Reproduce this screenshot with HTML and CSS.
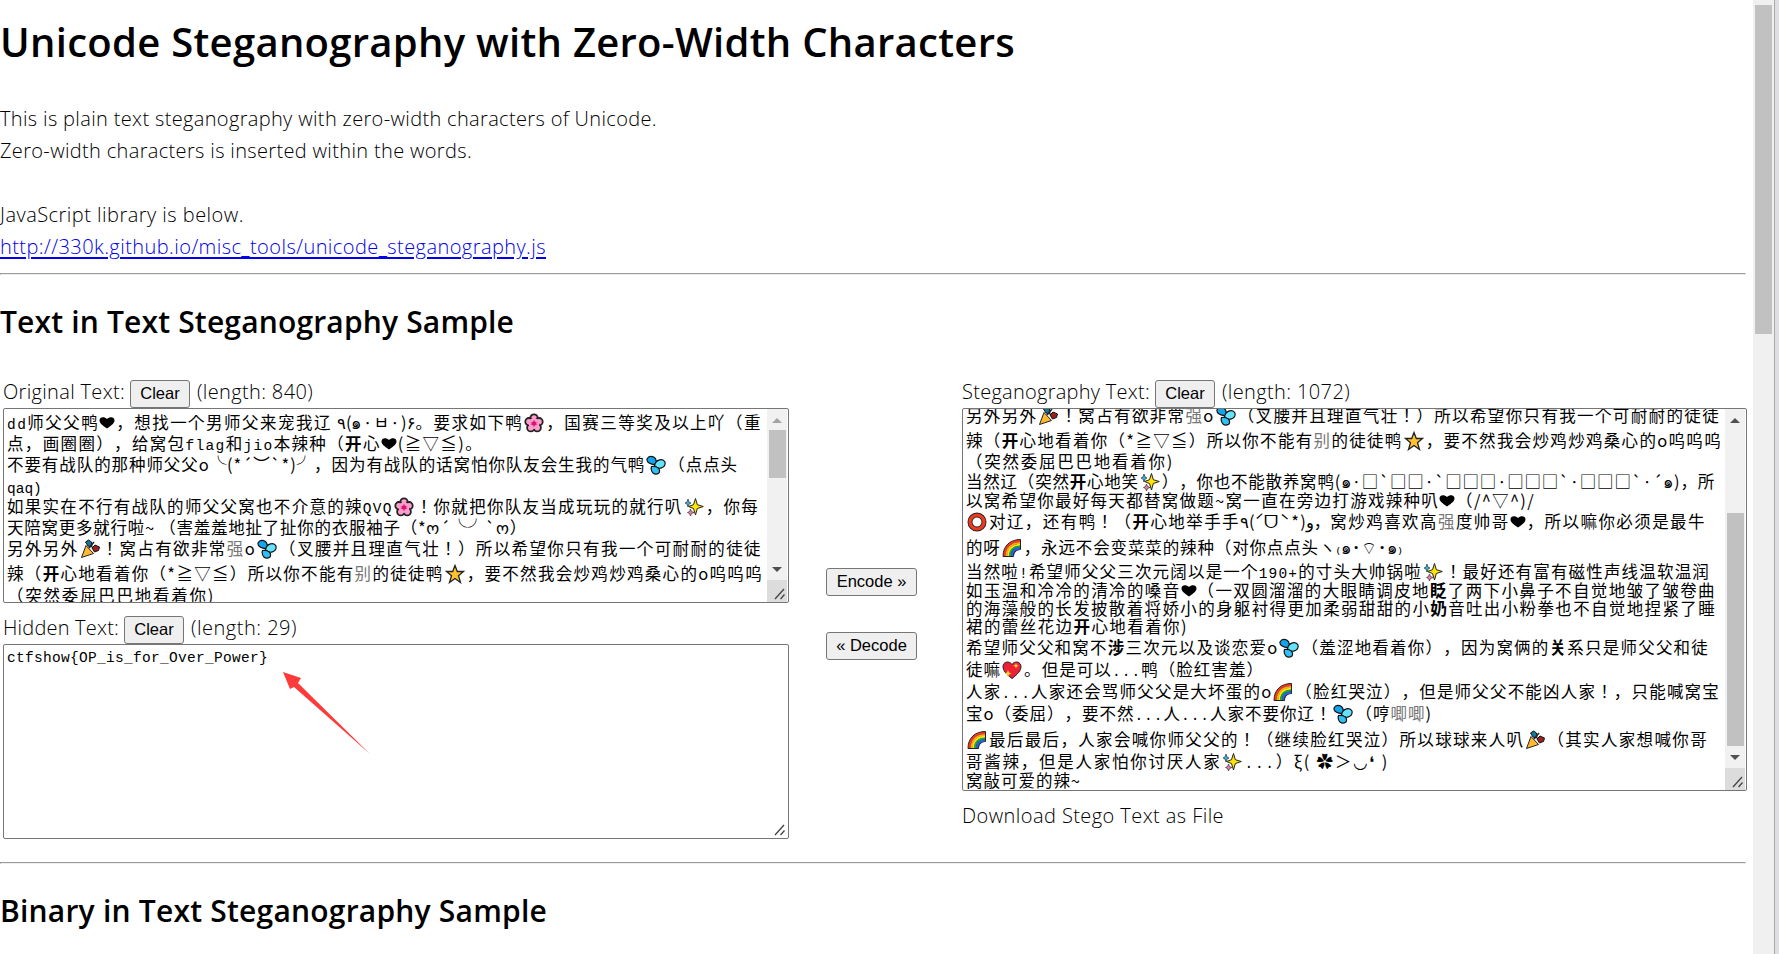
FILE: index.html
```
<!DOCTYPE html>
<html lang="ja">
<head>
    <meta charset="utf-8">
    <title>Unicode Steganography with Zero-Width Characters</title>
    <link rel="stylesheet" href="styles.css">
</head>
<body>
    <!-- emoji used inside the texts -->
    <svg class="defs" width="0" height="0">
        <symbol id="flower" viewBox="0 0 20 20">
            <g fill="#ff9dcc" stroke="#222" stroke-width="1.8">
                <circle cx="10" cy="5" r="3.7"/><circle cx="15" cy="8.7" r="3.7"/><circle cx="13.2" cy="14.7" r="3.7"/><circle cx="6.8" cy="14.7" r="3.7"/><circle cx="5" cy="8.7" r="3.7"/>
            </g>
            <circle cx="10" cy="10.5" r="5.4" fill="#ff9dcc"/>
            <path d="M10 7v7M6.7 9.5l6.6 2M13.3 9.5l-6.6 2" stroke="#ec4a9b" stroke-width="1.2"/>
            <circle cx="10" cy="10.5" r="2.2" fill="#d9146f"/>
        </symbol>
        <symbol id="party" viewBox="0 0 20 20">
            <path d="M1.500 18.500L6 6.500l7.500 8z" fill="#ffb92e" stroke="#222"/>
            <path d="M5.500 3l3-2 3 2 .5 5-4-1z" fill="#0e7aa0" stroke="#111"/>
            <path d="M12 9l3-3 4.500 2-1 3.500-4 1.500z" fill="#9d2020" stroke="#111"/>
            <path d="M9 9l5-6" stroke="#222" stroke-width="1.500"/>
        </symbol>
        <symbol id="drops" viewBox="0 0 20 20">
            <g stroke="#111" stroke-width="1.200">
                <path d="M10.500 9.500C4 10 .5 7 1 4 3 0 11 0 10.500 9.500z" fill="#12a5ef"/>
                <path d="M8.500 10.500C10 4 17 3 19 7 20 13 12 15.500 8.500 10.500z" fill="#64e3ff"/>
                <path d="M5.500 11.500C11 10.500 15 14 13 18 8.500 21 4 17 5.500 11.500z" fill="#2fc1f5"/>
            </g>
        </symbol>
        <symbol id="sparkles" viewBox="0 0 20 20">
            <path d="M11.500 1.500l1.800 6.200 6 1.800-6 2-1.800 6.500-2-6.500-5-2 5-1.800z" fill="#ffe500" stroke="#222"/>
            <path d="M4 2l1 3 2 1-2 1-1 3-1-3-2-1 2-1z" fill="#28b7e5" stroke="#333" stroke-width=".7"/>
            <path d="M6.500 12l1 2.500 2.500 1-2.500 1-1 2.500-1-2.500-2-1 2-1z" fill="#ef79ae" stroke="#333" stroke-width=".7"/>
        </symbol>
        <symbol id="star" viewBox="0 0 20 20">
            <path d="M10 1.500l2.300 6h6.200l-5 4.200 2 6.800-5.500-4-5.500 4 2-6.800-5-4.200h6.200z" fill="#ffc22f" stroke="#222" stroke-width="1.300"/>
        </symbol>
        <symbol id="ring" viewBox="0 0 20 20">
            <circle cx="10" cy="10" r="7" fill="none" stroke="#222" stroke-width="5"/>
            <circle cx="10" cy="10" r="7" fill="none" stroke="#f2391f" stroke-width="3.200"/>
        </symbol>
        <symbol id="rainbow" viewBox="0 0 20 20">
            <path d="M1 18.500C1 8 8 1.500 18.500 1.500v10c-4 0-7 3-7 7z" fill="#222" stroke="#222"/>
            <g fill="none" stroke-width="2">
                <path d="M2.500 18C2.500 8.500 9 3 18 3" stroke="#f23a22"/>
                <path d="M4.500 18C4.500 10 10 5 18 5" stroke="#ffa51f"/>
                <path d="M6.300 18C6.300 11 11 6.800 18 6.800" stroke="#ffe500"/>
                <path d="M8 18c0-6 4-9.500 10-9.500" stroke="#1aa64a"/>
                <path d="M10 18c0-5 3-7.500 8-7.500" stroke="#2a61e8"/>
            </g>
        </symbol>
        <symbol id="loveheart" viewBox="0 0 20 20">
            <path d="M10 18.500C4 14 1 10.500 1 6.500 1 1.500 7.500.5 10 4.500 12.500.5 19 1.500 19 6.500c0 4-3 7.500-9 12z" fill="#ed2136" stroke="#222"/>
            <path d="M14 3l.8 2 2 .8-2 .8-.8 2-.8-2-2-.8 2-.8zM6 10l1 2.500 2.500 1-2.500 1-1 2.500-1-2.500-2.500-1 2.500-1z" fill="#ffd52b"/>
        </symbol>
        <symbol id="heart" viewBox="0 0 16 20">
            <path d="M8 15.500C3 12 .5 10 .5 7.500c0-4 5-4 7.500-1.500 2.500-2.500 7.500-2.500 7.500 1.500 0 2.500-2.500 4.500-7.500 8z"/>
        </symbol>
    </svg>

    <div class="page">
        <h1><span data-width="1015">Unicode Steganography with Zero-Width Characters</span></h1>
        <p>
            <span data-width="657">This is plain text steganography with zero-width characters of Unicode.</span><br>
            <span data-width="472">Zero-width characters is inserted within the words.</span><br>
            <br>
            <span data-width="244">JavaScript library is below.</span><br>
            <a href="#" data-width="546">http://330k.github.io/misc_tools/unicode_steganography.js</a>
        </p>
        <hr>
        <h2><span data-width="514">Text in Text Steganography Sample</span></h2>

        <div class="sample">
            <div class="column">
                <div class="label"><span data-width="122">Original Text:</span><button>Clear</button><span data-width="116">(length: 840)</span></div>
                <div class="box box-original">
                    <div class="lines lines-original">
                        <div><span data-width="755"><i>dd</i>师父父鸭<svg class="heart"><use href="#heart"/></svg>，想找一个男师父来宠我辽 ٩(๑·ㅂ·)۶。要求如下鸭<svg><use href="#flower"/></svg>，国赛三等奖及以上吖（重</span></div>
                        <div><span data-width="476">点，画圈圈），给窝包<i>flag</i>和<i>jio</i>本辣种（<b>开</b>心<svg class="heart"><use href="#heart"/></svg>(≧▽≦)。</span></div>
                        <div><span data-width="731">不要有战队的那种师父父o╰(*´︶`*)╯，因为有战队的话窝怕你队友会生我的气鸭<svg><use href="#drops"/></svg>（点点头</span></div>
                        <div><i>qaq)</i></div>
                        <div><span data-width="752">如果实在不行有战队的师父父窝也不介意的辣<i>QVQ</i><svg><use href="#flower"/></svg>！你就把你队友当成玩玩的就行叭<svg><use href="#sparkles"/></svg>，你每</span></div>
                        <div><span data-width="520">天陪窝更多就行啦~ （害羞羞地扯了扯你的衣服袖子（*ო´╰╯`ო）</span></div>
                        <div><span data-width="755">另外另外<svg><use href="#party"/></svg>！窝占有欲非常<em>强</em>o<svg><use href="#drops"/></svg>（叉腰并且理直气壮！）所以希望你只有我一个可耐耐的徒徒</span></div>
                        <div><span data-width="756">辣（<b>开</b>心地看着你（*≧▽≦）所以你不能有<em>别</em>的徒徒鸭<svg><use href="#star"/></svg>，要不然我会炒鸡炒鸡桑心的o呜呜呜</span></div>
                        <div><span data-width="208">（突然委屈巴巴地看着你)</span></div>
                    </div>
                    <div class="scroll">
                        <span class="arrow up off"></span>
                        <span class="thumb thumb-original"></span>
                        <span class="arrow down"></span>
                        <span class="corner"></span>
                    </div>
                    <svg class="grip" viewBox="0 0 12 12"><path d="M1 11L10 1M6.500 11L10.500 6.500"/></svg>
                </div>
                <div class="label"><span data-width="116">Hidden Text:</span><button>Clear</button><span data-width="106">(length: 29)</span></div>
                <div class="box box-hidden">
                    <div class="lines lines-hidden"><div><i data-width="261">ctfshow{OP_is_for_Over_Power}</i></div></div>
                    <svg class="grip" viewBox="0 0 12 12"><path d="M1 11L10 1M6.500 11L10.500 6.500"/></svg>
                    <svg class="pointer" viewBox="0 0 88 84"><path d="M0 0l18 6-3 5 72 71L11 15l-4 2z"/></svg>
                </div>
            </div>

            <div class="actions">
                <button>Encode »</button>
                <button>« Decode</button>
            </div>

            <div class="column">
                <div class="label"><span data-width="188">Steganography Text:</span><button>Clear</button><span data-width="128">(length: 1072)</span></div>
                <div class="box box-stego">
                    <div class="lines lines-stego">
                        <div><span data-width="754">另外另外<svg><use href="#party"/></svg>！窝占有欲非常<em>强</em>o<svg><use href="#drops"/></svg>（叉腰并且理直气壮！）所以希望你只有我一个可耐耐的徒徒</span></div>
                        <div><span data-width="756">辣（<b>开</b>心地看着你（*≧▽≦）所以你不能有<em>别</em>的徒徒鸭<svg><use href="#star"/></svg>，要不然我会炒鸡炒鸡桑心的o呜呜呜</span></div>
                        <div><span data-width="208">（突然委屈巴巴地看着你)</span></div>
                        <div><span data-width="749">当然辽（突然<b>开</b>心地笑<svg><use href="#sparkles"/></svg>），你也不能散养窝鸭(๑·□`□□·`□□□·□□□`·□□□`·´๑)，所</span></div>
                        <div><span data-width="569">以窝希望你最好每天都替窝做题~窝一直在旁边打游戏辣种叭<svg class="heart"><use href="#heart"/></svg>（/^▽^)/</span></div>
                        <div><span data-width="740"><svg><use href="#ring"/></svg>对辽，还有鸭！（<b>开</b>心地举手手٩(ˊᗜˋ*)و，窝炒鸡喜欢高<em>强</em>度帅哥<svg class="heart"><use href="#heart"/></svg>，所以嘛你必须是最牛</span></div>
                        <div><span data-width="437">的呀<svg><use href="#rainbow"/></svg>，永远不会变菜菜的辣种（对你点点头ヽ₍๑˙⌔˙๑₎</span></div>
                        <div><span data-width="744">当然啦<i>!</i>希望师父父三次元阔以是一个<i>190+</i>的寸头大帅锅啦<svg><use href="#sparkles"/></svg>！最好还有富有磁性声线温软温润</span></div>
                        <div><span data-width="750">如玉温和冷冷的清冷的嗓音<svg class="heart"><use href="#heart"/></svg>（一双圆溜溜的大眼睛调皮地<b>眨</b>了两下小鼻子不自觉地皱了皱卷曲</span></div>
                        <div><span data-width="750">的海藻般的长发披散着将娇小的身躯衬得更加柔弱甜甜的小<b>奶</b>音吐出小粉拳也不自觉地捏紧了睡</span></div>
                        <div><span data-width="222">裙的蕾丝花边<b>开</b>心地看着你)</span></div>
                        <div><span data-width="743">希望师父父和窝不<b>涉</b>三次元以及谈恋爱o<svg><use href="#drops"/></svg>（羞涩地看着你），因为窝俩的<b>关</b>系只是师父父和徒</span></div>
                        <div><span data-width="298">徒嘛<svg><use href="#loveheart"/></svg>。但是可以<i>...</i>鸭（脸红害羞）</span></div>
                        <div><span data-width="754">人家<i>...</i>人家还会骂师父父是大坏蛋的o<svg><use href="#rainbow"/></svg>（脸红哭泣），但是师父父不能凶人家！，只能喊窝宝</span></div>
                        <div><span data-width="466">宝o（委屈），要不然<i>...</i>人<i>...</i>人家不要你辽！<svg><use href="#drops"/></svg>（哼<em>唧唧</em>)</span></div>
                        <div><span data-width="742"><svg><use href="#rainbow"/></svg>最后最后，人家会喊你师父父的！（继续脸红哭泣）所以球球来人叭<svg><use href="#party"/></svg>（其实人家想喊你哥</span></div>
                        <div><span data-width="423">哥酱辣，但是人家怕你讨厌人家<svg><use href="#sparkles"/></svg><i>...</i>）ξ( ✿＞◡❛ )</span></div>
                        <div><span data-width="115">窝敲可爱的辣~</span></div>
                    </div>
                    <div class="scroll">
                        <span class="arrow up"></span>
                        <span class="thumb thumb-stego"></span>
                        <span class="arrow down"></span>
                        <span class="corner"></span>
                    </div>
                    <svg class="grip" viewBox="0 0 12 12"><path d="M1 11L10 1M6.500 11L10.500 6.500"/></svg>
                </div>
                <div class="download"><span data-width="262">Download Stego Text as File</span></div>
            </div>
        </div>

        <hr>
        <h2><span data-width="547">Binary in Text Steganography Sample</span></h2>
    </div>
    <div class="page-scroll"><div class="page-thumb"></div></div>

    <script src="script.js"></script>
</body>
</html>
```

FILE: styles.css
```
* {
    box-sizing: border-box;
}

body {
    margin: 0;
    height: 954px;
    display: flex;
    overflow: hidden;
    background: #fff;
    color: #000;
    font-family: "Open Sans", "Noto Sans CJK JP", sans-serif;
    font-size: 20px;
    font-weight: 300;
    line-height: 32px;
}

.defs {
    position: absolute;
}

.page {
    width: 1753px;
    flex: none;
}

[data-width] {
    display: inline-block;
    white-space: pre;
}

h1 {
    margin: 10px 0 0;
    font-size: 40px;
    font-weight: 600;
    line-height: 64px;
}

h2 {
    margin: 23px 0 0;
    font-size: 30px;
    font-weight: 600;
    line-height: 48px;
}

p {
    margin: 29px 0 0;
    height: 160px;
}

a {
    color: #0000ee;
    text-underline-offset: 3px;
}

hr {
    width: 1746px;
    height: 2px;
    margin: 10px 0 0;
    border: 1px solid;
    border-color: #9a9a9a #eee #eee #9a9a9a;
}

.sample {
    display: flex;
    height: 506px;
    padding: 34px 0 0 3px;
}

.column {
    width: 786px;
}

.label {
    display: flex;
    height: 28px;
    line-height: 23px;
}

button {
    width: 60px;
    height: 28px;
    margin: 0 7px 0 5px;
    padding: 0 0 2px;
    border: 1px solid #767676;
    border-radius: 3px;
    background: #efefef;
    color: #000;
    font: 16.5px "Liberation Sans", sans-serif;
}

.box {
    position: relative;
    display: flex;
    justify-content: space-between;
    border: 1px solid #767676;
    border-radius: 2px;
    overflow: hidden;
}

.box-original {
    height: 195px;
    margin-bottom: 13px;
}

.box-hidden {
    height: 195px;
    overflow: visible;
}

.box-stego {
    width: 785px;
    height: 383px;
}

/* text inside the boxes */
.lines {
    padding: 3px 0 0 3px;
    font-family: "Noto Sans CJK JP", "DejaVu Sans", sans-serif;
    font-size: 16.5px;
    font-weight: 400;
    line-height: 20px;
    white-space: nowrap;
    text-spacing-trim: space-all;
}

.lines-original {
    display: grid;
    grid-template-rows: 21px 21px 22px 20px 21px 21px 25px 22px 20px;
}

.lines-hidden {
    padding-top: 0;
}

.lines-stego {
    display: grid;
    margin-top: -4px;
    padding-top: 0;
    grid-template-rows: 25px 21px 20px 19px 21px 26px 24px 19px 18px 18px 21px 22px 22px 22px 26px 22px 19px 20px;
}

.lines div {
    height: 20px;
}

.lines i {
    font-family: "Liberation Mono", monospace;
    font-size: 14.5px;
    font-style: normal;
}

.lines b {
    font-weight: 700;
}

.lines em {
    color: #777;
    font-style: normal;
}

.lines svg {
    width: 20px;
    height: 20px;
    margin: 1px 2px -1px 1px;
    vertical-align: top;
}

.lines .heart {
    width: 16px;
    margin: 1px 1px -1px 0;
}

/* scrollbars */
.scroll {
    width: 20px;
    margin-right: 1px;
    display: flex;
    flex-direction: column;
    align-items: center;
    flex: none;
    background: #f1f1f1;
}

.arrow {
    border: 5px solid transparent;
}

.up {
    margin: 9px 0 7px;
    border-top-width: 0;
    border-bottom-color: #505050;
}

.off {
    border-bottom-color: #a3a3a3;
}

.down {
    margin: auto 0 8px;
    border-bottom-width: 0;
    border-top-color: #505050;
}

.thumb {
    width: 17px;
    background: #c1c1c1;
}

.thumb-original {
    height: 48px;
}

.thumb-stego {
    height: 233px;
    margin-top: 83px;
}

.corner {
    width: 20px;
    height: 22px;
    background: #dcdcdc;
}

.grip {
    position: absolute;
    right: 2px;
    bottom: 2px;
    width: 12px;
    height: 12px;
    fill: none;
    stroke: #444;
    stroke-width: 1.3;
}

.pointer {
    position: absolute;
    left: 279px;
    top: 27px;
    width: 88px;
    height: 84px;
    fill: #ff3a3a;
}

.actions {
    width: 173px;
    padding-top: 188px;
    display: flex;
    flex-direction: column;
    gap: 36px;
}

.actions button {
    width: 91px;
    margin-left: 37px;
}

.download {
    margin-top: 9px;
}

.page-scroll {
    width: 26px;
    padding: 5px 0 0 2px;
    background: linear-gradient(to right, #f0f0f0 21px, #a9a9ab 21px, #a9a9ab 22px, #dedee3 22px);
}

.page-thumb {
    width: 17px;
    height: 329px;
    background: #c1c1c1;
}
```

FILE: script.js
```
// spread the letters of each line over its set width
document.querySelectorAll('[data-width]').forEach(el => {
    const count = Array.from(el.textContent).length;
    const width = Number(el.dataset.width);
    let spacing = 0;
    for (let i = 0; i < 4; i++) {
        spacing += (width - el.getBoundingClientRect().width) / count;
        el.style.letterSpacing = spacing + 'px';
    }
});
```
